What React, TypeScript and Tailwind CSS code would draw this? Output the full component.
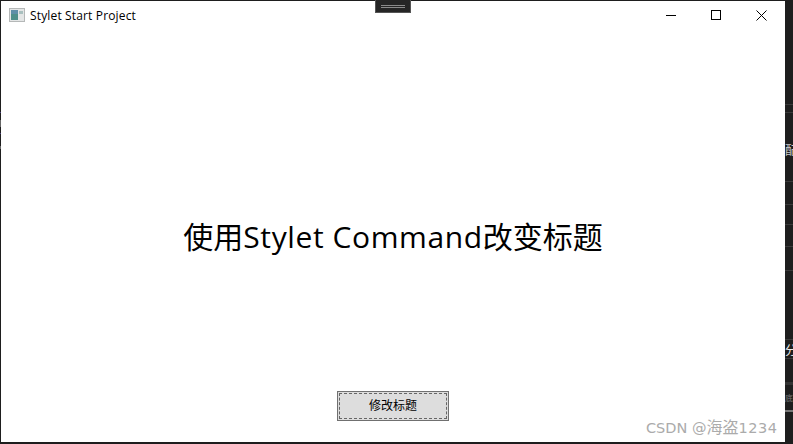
const sans = { fontFamily: '"Open Sans", "Noto Sans CJK SC", sans-serif' };
const cjk = { fontFamily: '"Noto Sans CJK SC", sans-serif' };

function LeftEdge() {
  return (
    <div className="w-px shrink-0 flex flex-col">
      <div className="h-[112px]" />
      <div className="h-px bg-[#4a3f78]" />
      <div className="h-[7px]" />
      <div className="h-[7px] bg-[#666666]" />
      <div className="h-[6px]" />
      <div className="h-px bg-[#4a3f78]" />
      <div className="h-[12px]" />
      <div className="h-[3px] bg-[#666666]" />
    </div>
  );
}

function RightStrip() {
  return (
    <div className="w-[8px] shrink-0 flex flex-col overflow-hidden text-[#cccccc]" style={cjk}>
      <div className="h-[104px] shrink-0 border-b border-[#3a3a3a]" />
      <div className="h-[8px] shrink-0 border-b border-[#3a3a3a]" />
      <div className="h-[69px] shrink-0 border-b border-[#3a3a3a] pt-[29px] text-[12px] leading-[16px]">配</div>
      <div className="h-[23px] shrink-0 border-b border-[#3a3a3a]" />
      <div className="h-[20px] shrink-0 border-b border-[#3a3a3a]" />
      <div className="h-[22px] shrink-0 border-b border-[#3a3a3a]" />
      <div className="h-[24px] shrink-0 border-b border-[#3a3a3a]" />
      <div className="h-[69px] shrink-0 border-b border-[#3a3a3a]" />
      <div className="h-[19px] shrink-0 border-b border-[#3a3a3a] pt-[2px] text-[12px] leading-[16px] text-[#eeeeee]">分</div>
      <div className="h-[26px] shrink-0 border-b-[3px] border-[#333333]" />
      <div className="h-[27px] shrink-0 border-b-[2px] border-[#777777] pt-[8px] text-[8px] leading-[10px] text-[#777777]">底</div>
    </div>
  );
}

export default function App() {
  return (
    <div className="relative w-[793px] h-[444px] overflow-hidden bg-[#1e1e1e] flex">
      <LeftEdge />
      <div className="flex-1 pt-px pb-[2px] flex">
        <div className="flex-1 bg-white flex flex-col" style={sans}>
          <div className="h-[30px] flex items-center shrink-0">
            <svg width="16" height="14" viewBox="0 0 16 14" className="ml-[8px] mt-[-3px]">
              <rect x="0.5" y="0.5" width="15" height="13" fill="#e4e6e6" stroke="#b5b8b8" />
              <rect x="2" y="2" width="7" height="10" fill="#4f8f8a" />
              <rect x="2" y="2" width="7" height="4" fill="#5f8fa8" />
              <rect x="10" y="3" width="4" height="3" fill="#a9c0bf" />
            </svg>
            <span className="ml-[5px] mt-[-1px] text-[12px] leading-[16px] text-black tracking-[0.15px]">Stylet Start Project</span>
            <div className="ml-auto flex items-center mt-[-2px]">
              <div className="w-[46px] flex justify-center">
                <svg width="10" height="10" viewBox="0 0 10 10" className="ml-[2px]"><path d="M0 5.5H10" stroke="#000" strokeWidth="1" /></svg>
              </div>
              <div className="w-[46px] flex justify-center">
                <svg width="10" height="10" viewBox="0 0 10 10"><rect x="0.5" y="0.5" width="9" height="9" fill="none" stroke="#000" /></svg>
              </div>
              <div className="w-[46px] flex justify-center">
                <svg width="11" height="11" viewBox="0 0 11 11" className="mr-[1px]"><path d="M0.5 0.5L10.5 10.5M10.5 0.5L0.5 10.5" stroke="#000" strokeWidth="1" /></svg>
              </div>
            </div>
          </div>
          <div className="flex-1 flex flex-col items-center">
            <div className="mt-[184px] text-[30px] leading-[44px] text-black whitespace-nowrap">
              使用<span className="tracking-[0.6px]">Stylet Command</span>改变标题
            </div>
            <button className="mt-[132px] w-[112px] h-[30px] bg-[#dddddd] border border-[#707070] p-px flex">
              <span className="flex-1 border border-dashed border-[#666666] flex items-center justify-center text-[12px] text-black">修改标题</span>
            </button>
          </div>
        </div>
        <RightStrip />
      </div>

      <div className="absolute left-[375px] top-0 w-[36px] h-[13px] bg-[#252525] border border-t-0 border-[#555] flex flex-col items-center justify-center gap-px">
        <div className="w-[24px] h-px bg-[#8a8a8a]" />
        <div className="w-[24px] h-px bg-[#8a8a8a]" />
      </div>

      <div className="absolute left-[646px] top-[416px] text-[14.5px] leading-[20px] text-[#ababab] whitespace-nowrap" style={{ fontFamily: '"DejaVu Sans", "Noto Sans CJK SC", sans-serif' }}>
        CSDN @<span className="text-[16px]" style={cjk}>海盗</span><span className="tracking-[0.5px]">1234</span>
      </div>
    </div>
  );
}
